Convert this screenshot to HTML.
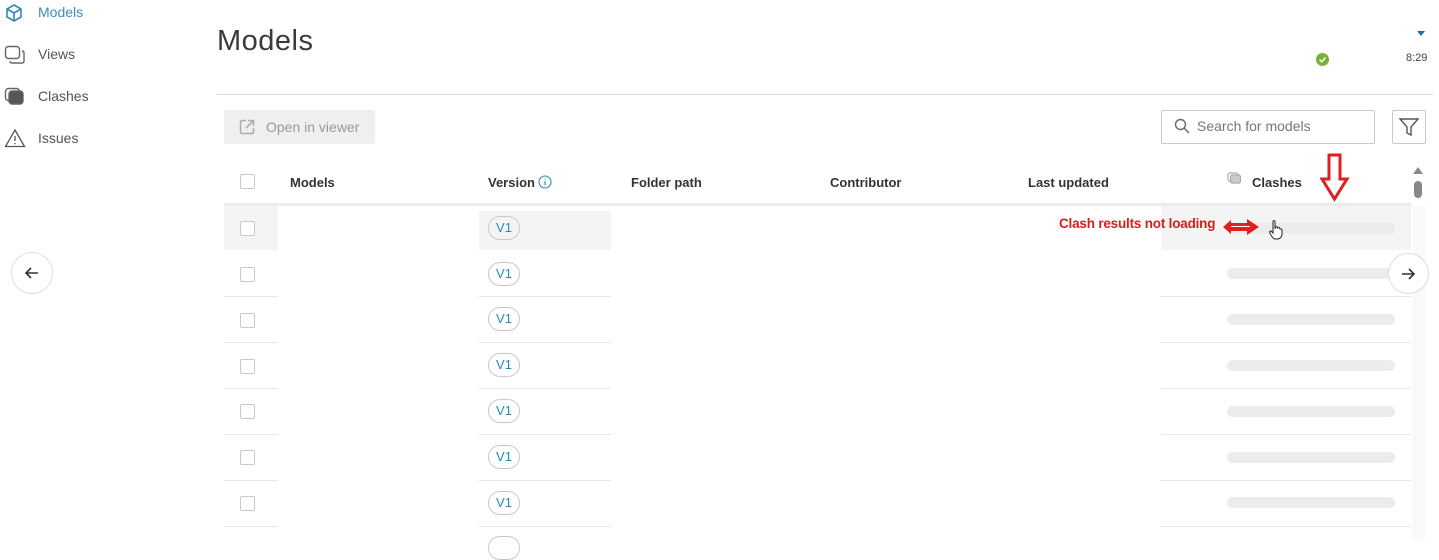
<!DOCTYPE html>
<html><head><meta charset="utf-8"><style>
*{margin:0;padding:0;box-sizing:border-box}
body{width:1439px;height:539px;overflow:hidden;background:#fff;font-family:"Liberation Sans",sans-serif;position:relative;color:#3c3c3c}
.a{position:absolute}
.nav{font-size:14px;color:#555}
.cb{position:absolute;left:240px;width:15px;height:15px;border:1px solid #c8c8c8;border-radius:2px;background:#fff}
.th{font-size:13px;font-weight:bold;color:#333;top:175px}
.pill{position:absolute;left:488px;width:32px;height:24px;border:1px solid #c8c8c8;border-radius:12px;color:#2a8ab5;font-size:13px;text-align:center;line-height:22px}
.sk{position:absolute;left:1227px;width:168px;height:11px;border-radius:6px;background:#ececec}
.sep{position:absolute;height:1px;background:#e6e6e6}
</style></head><body>
<svg class="a" style="left:4px;top:3px" width="20" height="20" viewBox="0 0 20 20" fill="none" stroke="#2a8ab5" stroke-width="1.6"><path d="M10 2 L17 6 V14 L10 18 L3 14 V6 Z M3 6 L10 10 L17 6 M10 10 V18"/></svg>
<div class="a nav" style="left:38px;top:4px;color:#3a8fb7">Models</div>
<svg class="a" style="left:4px;top:45px" width="22" height="20" viewBox="0 0 22 20" fill="none" stroke="#666" stroke-width="1.4"><rect x="1.5" y="1.5" width="14" height="12" rx="3"/><path d="M18 6 Q20 6 20 8 V16 Q20 18 18 18 H8 Q6 18 6 16"/></svg>
<div class="a nav" style="left:38px;top:46px">Views</div>
<svg class="a" style="left:4px;top:87px" width="22" height="20" viewBox="0 0 22 20" stroke="#666" stroke-width="1.4"><rect x="1.5" y="1.5" width="14" height="12" rx="3" fill="none"/><rect x="5" y="4" width="14" height="13" rx="3" fill="#555"/></svg>
<div class="a nav" style="left:38px;top:88px">Clashes</div>
<svg class="a" style="left:4px;top:128px" width="22" height="20" viewBox="0 0 22 20" fill="none" stroke="#555" stroke-width="1.3"><path d="M11 2 L20.5 18.5 H1.5 Z M11 8 V13 M11 15 V16.2"/></svg>
<div class="a nav" style="left:38px;top:130px">Issues</div>

<div class="a" style="left:11px;top:252px;width:42px;height:42px;border:1px solid #ddd;border-radius:50%;background:#fff"></div>
<svg class="a" style="left:23px;top:264px" width="18" height="18" viewBox="0 0 18 18" fill="none" stroke="#333" stroke-width="1.6"><path d="M15 9 H3 M8 4 L3 9 L8 14"/></svg>

<div class="a" style="left:217px;top:25px;font-size:29px;color:#3a3a3a;letter-spacing:0.5px">Models</div>
<div class="a" style="left:1417px;top:31px;width:0;height:0;border-left:4px solid transparent;border-right:4px solid transparent;border-top:5px solid #1a6fa8"></div>
<div class="a" style="left:1316px;top:53px;width:13px;height:13px;border-radius:50%;background:#7ab03a"></div>
<svg class="a" style="left:1316px;top:53px" width="13" height="13" viewBox="0 0 13 13" fill="none" stroke="#fff" stroke-width="1.5"><path d="M3.5 6.5 L5.8 8.8 L9.5 4.5"/></svg>
<div class="a" style="left:1406px;top:52px;font-size:11px;color:#444">8:29</div>
<div class="a" style="left:217px;top:94px;width:1216px;height:1px;background:#ddd"></div>

<div class="a" style="left:224px;top:110px;width:151px;height:34px;background:#efefef;border-radius:2px"></div>
<svg class="a" style="left:238px;top:118px" width="18" height="18" viewBox="0 0 18 18" fill="none" stroke="#aaa" stroke-width="1.5"><path d="M8 2.5 H4.5 Q2.5 2.5 2.5 4.5 V13.5 Q2.5 15.5 4.5 15.5 H13.5 Q15.5 15.5 15.5 13.5 V10 M10 2.5 H15.5 V8 M15.5 2.5 L8 10"/></svg>
<div class="a" style="left:266px;top:119px;font-size:14px;color:#999">Open in viewer</div>
<div class="a" style="left:1161px;top:110px;width:214px;height:34px;border:1px solid #c8c8c8;border-radius:2px"></div>
<svg class="a" style="left:1174px;top:118px" width="16" height="16" viewBox="0 0 16 16" fill="none" stroke="#666" stroke-width="1.4"><circle cx="6.5" cy="6.5" r="5"/><path d="M10 10 L15 15"/></svg>
<div class="a" style="left:1197px;top:118px;font-size:14px;color:#777">Search for models</div>
<div class="a" style="left:1392px;top:110px;width:34px;height:34px;border:1px solid #c8c8c8;border-radius:2px"></div>
<svg class="a" style="left:1398px;top:116px" width="22" height="22" viewBox="0 0 22 22" fill="none" stroke="#555" stroke-width="1.4"><path d="M2 3 H20 L13 11 V19 L9 17 V11 Z"/></svg>

<div class="cb" style="top:174px"></div>
<div class="a th" style="left:290px">Models</div>
<div class="a th" style="left:488px">Version</div>
<svg class="a" style="left:538px;top:175px" width="14" height="14" viewBox="0 0 14 14" fill="none" stroke="#2a8ab5" stroke-width="1.1"><circle cx="7" cy="7" r="6"/><path d="M7 6 V10.5 M7 3.6 V4.6"/></svg>
<div class="a th" style="left:631px">Folder path</div>
<div class="a th" style="left:830px">Contributor</div>
<div class="a th" style="left:1028px">Last updated</div>
<svg class="a" style="left:1227px;top:172px" width="16" height="14" viewBox="0 0 16 14" stroke="#aaa" stroke-width="1.2"><rect x="1" y="1" width="10" height="8" rx="2" fill="none"/><rect x="3.5" y="3" width="10" height="8" rx="2" fill="#ccc"/></svg>
<div class="a th" style="left:1252px">Clashes</div>
<div class="a" style="left:224px;top:203px;width:1188px;height:3px;background:#ececec"></div>

<div class="a" style="left:1412px;top:206px;width:14px;height:333px;background:#fafafa"></div>
<div class="a" style="left:1413px;top:167px;width:0;height:0;border-left:5px solid transparent;border-right:5px solid transparent;border-bottom:7px solid #888"></div>
<div class="a" style="left:1414px;top:181px;width:8px;height:17px;border-radius:4px;background:#888"></div>

<div class="a" style="left:224px;top:206px;width:54px;height:44px;background:#f4f4f4"></div>
<div class="a" style="left:479px;top:211px;width:132px;height:39px;background:#f4f4f4"></div>
<div class="a" style="left:1161px;top:206px;width:250px;height:44px;background:#f4f4f4"></div>

<div class="cb" style="top:221px"></div><div class="pill" style="top:216px">V1</div><div class="sk" style="top:223px;background:#ebebeb"></div>
<div class="cb" style="top:267px"></div><div class="pill" style="top:262px">V1</div><div class="sk" style="top:268px"></div>
<div class="cb" style="top:313px"></div><div class="pill" style="top:307px">V1</div><div class="sk" style="top:314px"></div>
<div class="cb" style="top:359px"></div><div class="pill" style="top:353px">V1</div><div class="sk" style="top:360px"></div>
<div class="cb" style="top:404px"></div><div class="pill" style="top:399px">V1</div><div class="sk" style="top:406px"></div>
<div class="cb" style="top:450px"></div><div class="pill" style="top:445px">V1</div><div class="sk" style="top:452px"></div>
<div class="cb" style="top:496px"></div><div class="pill" style="top:491px">V1</div><div class="sk" style="top:497px"></div>
<div class="pill" style="top:536px"></div>

<div class="sep" style="left:224px;top:296px;width:54px"></div><div class="sep" style="left:479px;top:296px;width:132px"></div><div class="sep" style="left:1161px;top:296px;width:250px"></div>
<div class="sep" style="left:224px;top:342px;width:54px"></div><div class="sep" style="left:479px;top:342px;width:132px"></div><div class="sep" style="left:1161px;top:342px;width:250px"></div>
<div class="sep" style="left:224px;top:388px;width:54px"></div><div class="sep" style="left:479px;top:388px;width:132px"></div><div class="sep" style="left:1161px;top:388px;width:250px"></div>
<div class="sep" style="left:224px;top:434px;width:54px"></div><div class="sep" style="left:479px;top:434px;width:132px"></div><div class="sep" style="left:1161px;top:434px;width:250px"></div>
<div class="sep" style="left:224px;top:480px;width:54px"></div><div class="sep" style="left:479px;top:480px;width:132px"></div><div class="sep" style="left:1161px;top:480px;width:250px"></div>
<div class="sep" style="left:224px;top:526px;width:54px"></div><div class="sep" style="left:479px;top:526px;width:132px"></div><div class="sep" style="left:1161px;top:526px;width:250px"></div>

<div class="a" style="left:1388px;top:253px;width:41px;height:41px;border:1px solid #ddd;border-radius:50%;background:#fff"></div>
<svg class="a" style="left:1399px;top:265px" width="18" height="18" viewBox="0 0 18 18" fill="none" stroke="#333" stroke-width="1.6"><path d="M3 9 H15 M10 4 L15 9 L10 14"/></svg>

<div class="a" style="left:1059px;top:216px;font-size:13.5px;font-weight:bold;color:#d91c1c;letter-spacing:-0.2px">Clash results not loading</div>
<svg class="a" style="left:1222px;top:218px" width="38" height="18" viewBox="0 0 38 18"><path d="M1 9 L9 2 V5 H25 V1 L37 9 L25 17 V13 H9 V16 Z" fill="#e0201f"/><path d="M9 8.5 H28" stroke="#fff" stroke-width="1"/></svg>
<svg class="a" style="left:1320px;top:153px" width="30" height="49" viewBox="0 0 30 49" fill="#fff" stroke="#e0201f" stroke-width="3"><path d="M9 2 H20 V26 H27 L14.5 46 L2 26 H9 Z"/></svg>
<svg class="a" style="left:1268px;top:219px" width="16" height="22" viewBox="0 0 16 22" fill="#fff" stroke="#222" stroke-width="1"><path d="M5 2 Q6.5 1 7 2.5 V10 L7.5 8 Q9 7 9.5 9 L10 8.5 Q11.5 8 12 10 Q13.5 9.5 14 11 V16 Q13 20 9 20 H7 Q4 19 2 14 Q1 12 3 12 L5 14 Z"/></svg>
</body></html>
